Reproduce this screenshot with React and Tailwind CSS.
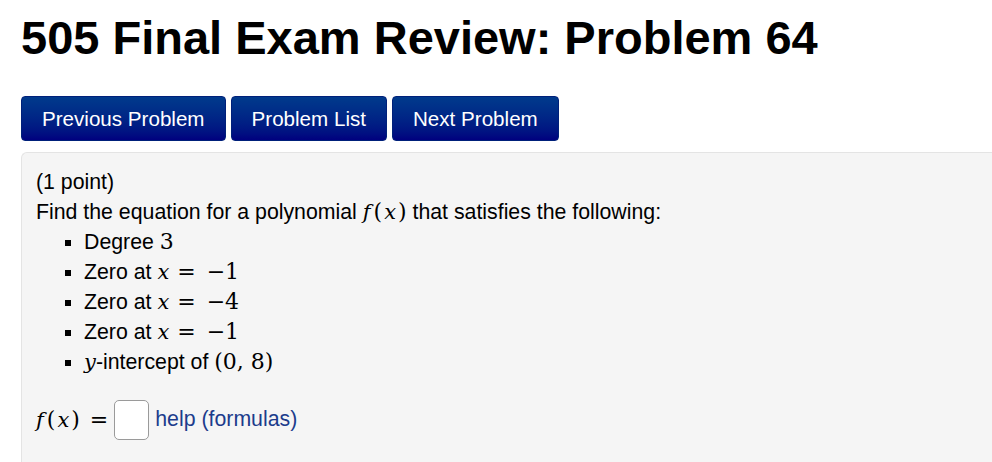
const sans = { fontFamily: '"Liberation Sans", Arial, sans-serif' }

function V({ children, className = '' }) {
  return <span className={`font-['DejaVu_Serif',serif] italic text-[21px] leading-[0] ${className}`}>{children}</span>
}

function N({ children, className = '' }) {
  return <span className={`font-['DejaVu_Serif',serif] text-[22px] leading-[0] ${className}`}>{children}</span>
}

function Fx() {
  return (
    <>
      <V className="mr-[3px]">f</V>
      <N>(</N>
      <V className="px-[2px]">x</V>
      <N>)</N>
    </>
  )
}

function Zero({ value }) {
  return (
    <>
      Zero at <V>x</V>
      <N>
        <span className="ml-[8px] mr-[11px]">=</span>−{value}
      </N>
    </>
  )
}

export default function App() {
  const nav = ['Previous Problem', 'Problem List', 'Next Problem']

  return (
    <div className="min-h-screen bg-white overflow-hidden font-['Liberation_Sans',Arial,sans-serif] text-black">
      <h1 className="pl-[21px] pt-[12px] text-[47px] font-bold leading-[52px]">505 Final Exam Review: Problem 64</h1>

      <div className="flex gap-[5px] pl-[21px] mt-[32px]">
        {nav.map((label) => (
          <button
            key={label}
            className="h-[45px] px-[20px] pt-[2px] rounded-[4px] text-[20.6px] text-white bg-gradient-to-b from-[#003a8c] to-[#00007f] border border-[#00207a]"
          >
            {label}
          </button>
        ))}
      </div>

      <div className="ml-[21px] mt-[11px] h-[320px] bg-[#f5f5f5] border-t border-l border-[#e4e4e4] rounded-tl-[6px] pl-[14px] pt-[15px] text-[21.3px] leading-[29.95px]" style={sans}>
        <div>(1 point)</div>
        <div>
          Find the equation for a polynomial <Fx /> that satisfies the following:
        </div>
        <ul className="list-[square] pl-[48px]">
          <li>
            Degree <N>3</N>
          </li>
          <li>
            <Zero value="1" />
          </li>
          <li>
            <Zero value="4" />
          </li>
          <li>
            <Zero value="1" />
          </li>
          <li>
            <V>y</V>-intercept of <N>(0, 8)</N>
          </li>
        </ul>

        <div className="flex items-center mt-[22px]">
          <Fx />
          <N>
            <span className="ml-[10px] mr-[6px]">=</span>
          </N>
          <input className="w-[35px] h-[40px] bg-white border border-[#9a9a9a] rounded-[5px]" />
          <a className="ml-[6px] text-[#1c3c8c]" href="#">
            help (formulas)
          </a>
        </div>
      </div>
    </div>
  )
}
